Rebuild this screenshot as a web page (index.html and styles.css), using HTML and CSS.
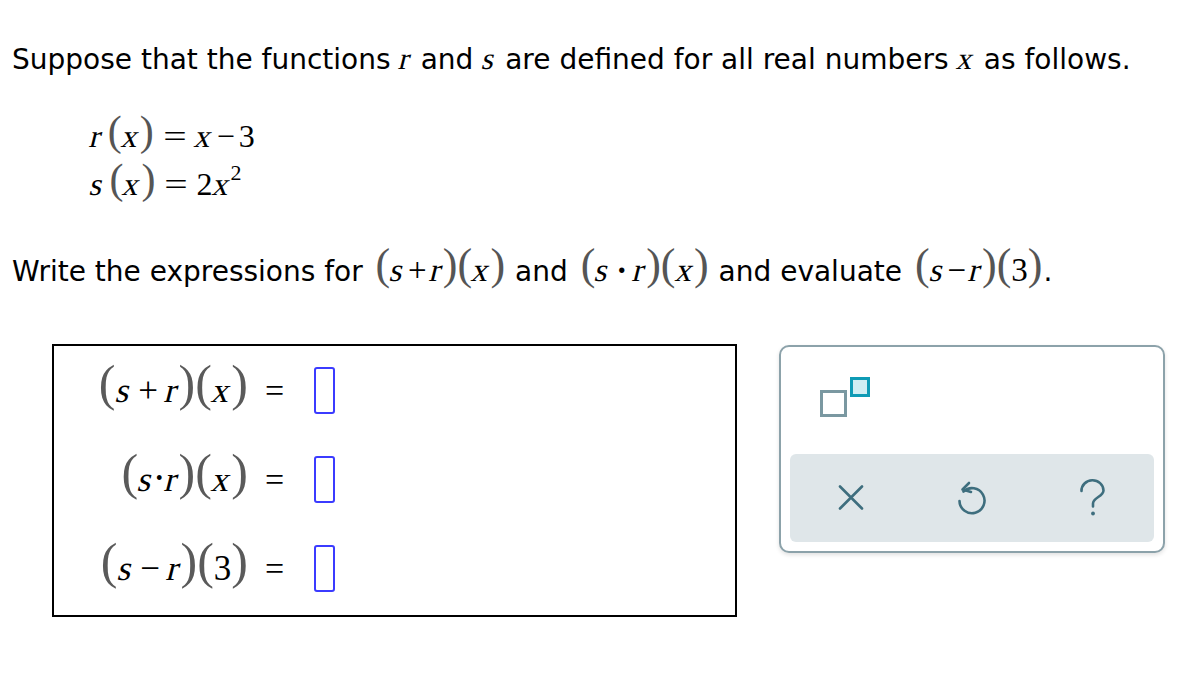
FILE: index.html
```html
<!DOCTYPE html>
<html>
<head>
<meta charset="utf-8">
<link rel="stylesheet" href="styles.css">
</head>
<body>
<div class="page">
  <p class="q1">Suppose that the functions <i class="mv">r</i> and <i class="mv">s</i> are defined for all real numbers <i class="mv">x</i> as follows.</p>
  <div class="defs">
    <div class="def"><i>r</i><span class="fa"></span><span class="p">(</span><i>x</i><span class="p">)</span><span class="rel">=</span><i>x</i><span class="bin">−</span>3</div>
    <div class="def"><i>s</i><span class="fa"></span><span class="p">(</span><i>x</i><span class="p">)</span><span class="rel">=</span>2<i>x</i><sup class="sup">2</sup></div>
  </div>
  <p class="q2">Write the expressions for <span class="im"><span class="p">(</span><i>s</i><span class="bint">+</span><i>r</i><span class="p">)</span><span class="p">(</span><i>x</i><span class="p">)</span></span> and <span class="im"><span class="p">(</span><i>s</i><span class="dot">·</span><i>r</i><span class="p">)</span><span class="p">(</span><i>x</i><span class="p">)</span></span> and evaluate <span class="im"><span class="p">(</span><i>s</i><span class="bint">−</span><i>r</i><span class="p">)</span><span class="p">(</span>3<span class="p">)</span></span>.</p>
  <div class="work">
    <div class="answer-box">
      <div class="row">
        <div class="lhs"><span class="bp">(</span><i>s</i><span class="bop">+</span><i>r</i><span class="bp">)</span><span class="bp">(</span><i>x</i><span class="bp">)</span></div>
        <div class="eq">=</div>
        <div class="blank"></div>
      </div>
      <div class="row">
        <div class="lhs"><span class="bp">(</span><i>s</i><span class="bdot">•</span><i>r</i><span class="bp">)</span><span class="bp">(</span><i>x</i><span class="bp">)</span></div>
        <div class="eq">=</div>
        <div class="blank"></div>
      </div>
      <div class="row">
        <div class="lhs"><span class="bp">(</span><i>s</i><span class="bop">−</span><i>r</i><span class="bp">)</span><span class="bp">(</span>3<span class="bp">)</span></div>
        <div class="eq">=</div>
        <div class="blank"></div>
      </div>
    </div>
    <div class="panel">
      <div class="palette">
        <svg class="sup-icon" width="54" height="44" viewBox="0 0 54 44">
          <rect x="3.5" y="16.5" width="24" height="24" fill="#fff" stroke="#7a98a1" stroke-width="3"/>
          <rect x="33.5" y="3.5" width="17" height="17" fill="#d0eef3" stroke="#0f9bb5" stroke-width="3"/>
        </svg>
      </div>
      <div class="actions">
        <div class="act">
          <svg width="30" height="30" viewBox="0 0 30 30">
            <path d="M4 3.5 L26 25.5 M26 3.5 L4 25.5" stroke="#3e6e7e" stroke-width="2.6" stroke-linecap="round" fill="none"/>
          </svg>
        </div>
        <div class="act">
          <svg width="34" height="40" viewBox="0 0 34 40">
            <path d="M4.5 23 A12.5 12.5 0 1 0 8.5 13.5" stroke="#3e6e7e" stroke-width="2.6" stroke-linecap="round" fill="none"/>
            <path d="M14 5 L7.5 11.5 L16 14" stroke="#3e6e7e" stroke-width="2.6" stroke-linecap="round" stroke-linejoin="round" fill="none"/>
          </svg>
        </div>
        <div class="act">
          <svg width="30" height="40" viewBox="0 0 30 40">
            <path d="M3.5 13 A11 10.5 0 0 1 25.5 12.5 C25.5 18.5 15 19.5 15 25.5 V28.5" stroke="#3e6e7e" stroke-width="2.6" stroke-linecap="round" fill="none"/>
            <circle cx="15" cy="35.5" r="1.9" fill="#3e6e7e"/>
          </svg>
        </div>
      </div>
    </div>
  </div>
</div>
</body>
</html>
```

FILE: styles.css
```css
body {
  margin: 0;
  font-family: "DejaVu Sans", Verdana, sans-serif;
  font-size: 28px;
  color: #000;
  background: #fff;
}

.page {
  padding: 44px 0 0 12px;
}

.q1 {
  margin: 0;
  line-height: 32px;
}

.mv,
.defs i,
.im i,
.lhs i {
  font-style: normal;
  display: inline-block;
  transform: skewX(-14deg);
}

.mv {
  font-family: "Liberation Serif", "Times New Roman", serif;
  font-size: 31px;
  line-height: 0;
  margin: 0 1px;
}

.defs {
  margin: 36px 0 0 78px;
  font-family: "Liberation Serif", "Times New Roman", serif;
  font-size: 32px;
  line-height: 48px;
}

.defs i {
  margin: 0 1px;
}

.fa {
  display: inline-block;
  width: 5px;
}

.p {
  font-size: 42px;
  line-height: 0;
  color: #555;
  vertical-align: 2px;
}

.rel {
  display: inline-block;
  margin: 0 11px 0 12px;
  transform: scaleX(1.3);
}

.bin {
  margin: 0 4px;
}

.sup {
  font-size: 22px;
  line-height: 0;
  vertical-align: 15px;
}

.q2 {
  margin: 44px 0 0;
  line-height: 40px;
}

.im {
  font-family: "Liberation Serif", "Times New Roman", serif;
  font-size: 33px;
  line-height: 0;
  margin: 0 1px 0 4px;
}

.im .p {
  font-size: 44px;
}

.im i {
  margin: 0 1px;
}

.bint {
  margin: 0 3px;
}

.dot {
  margin: 0 6px;
  font-weight: bold;
}

.work {
  display: flex;
  align-items: flex-start;
  gap: 42px;
  margin: 52px 0 0 40px;
}

.answer-box {
  width: 681px;
  border: 2px solid #000;
  padding: 0 0 2px;
}

.row {
  display: flex;
  align-items: center;
  height: 89px;
}

.lhs {
  width: 194px;
  text-align: right;
  font-family: "Liberation Serif", "Times New Roman", serif;
  font-size: 35px;
  line-height: 50px;
}

.lhs i {
  margin: 0 1px;
}

.bp {
  font-size: 50px;
  line-height: 0;
  color: #5a5a5a;
  vertical-align: 2px;
}

.bop {
  margin: 0 7px;
}

.bdot {
  font-size: 20px;
  margin: 0 2px;
  vertical-align: 6px;
  line-height: 0;
}

.eq {
  margin-left: 17px;
  font-family: "Liberation Serif", "Times New Roman", serif;
  font-size: 34px;
  line-height: 50px;
}

.blank {
  margin-left: 30px;
  width: 17px;
  height: 43px;
  border: 2px solid #3b3bff;
  border-radius: 3px;
}

.panel {
  margin-top: 1px;
  width: 382px;
  height: 204px;
  border: 2px solid #8ca2aa;
  border-radius: 10px;
  box-shadow: 0 2px 4px rgba(0, 0, 0, 0.12);
  display: flex;
  flex-direction: column;
  background: #fff;
}

.palette {
  height: 107px;
  padding: 28px 0 0 37px;
  box-sizing: border-box;
}

.sup-icon {
  display: block;
}

.actions {
  margin: 0 9px;
  height: 88px;
  background: #dfe6e9;
  border-radius: 6px;
  display: grid;
  grid-template-columns: 1fr 1fr 1fr;
  align-items: center;
  justify-items: center;
}

.act svg {
  display: block;
}
```
